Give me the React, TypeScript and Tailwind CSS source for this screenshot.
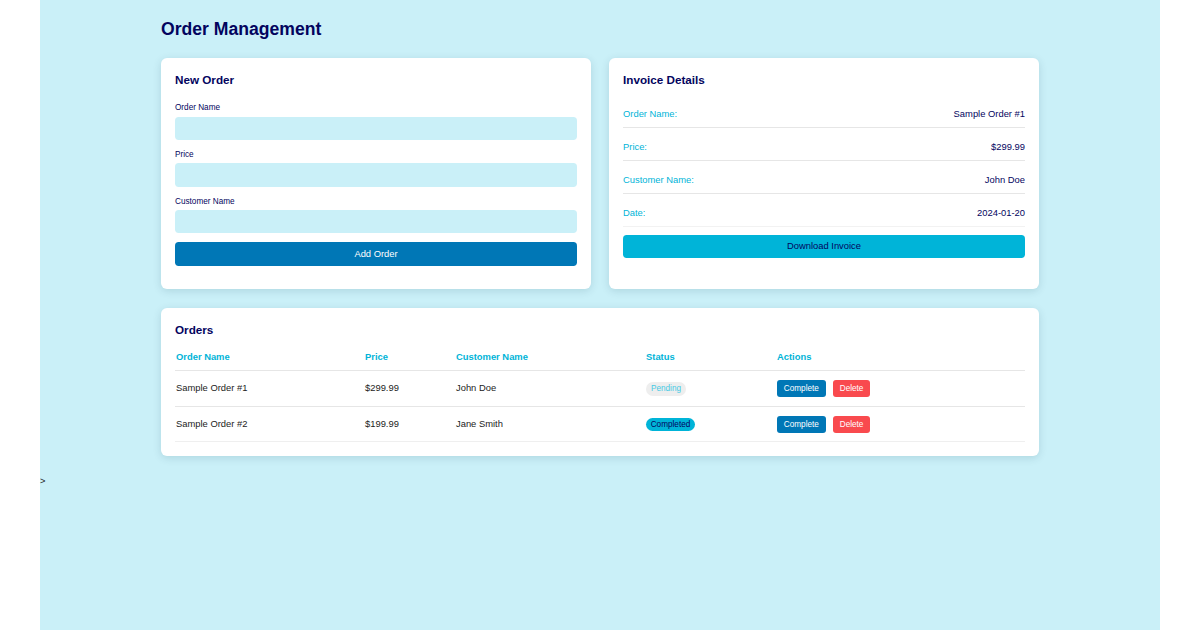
const orders = [
  { name: "Sample Order #1", price: "$299.99", customer: "John Doe", status: "Pending" },
  { name: "Sample Order #2", price: "$199.99", customer: "Jane Smith", status: "Completed" },
];

const invoice = [
  { label: "Order Name:", value: "Sample Order #1" },
  { label: "Price:", value: "$299.99" },
  { label: "Customer Name:", value: "John Doe" },
  { label: "Date:", value: "2024-01-20" },
];

function Field({ label, last }: { label: string; last?: boolean }) {
  return (
    <div className={last ? "mb-[9px]" : "mb-[10.2px]"}>
      <label className="block text-[8.2px] leading-[9.4px] mb-[3.7px] text-[#03045e]">{label}</label>
      <input type="text" className="block w-full h-[23.4px] rounded-[3.7px] bg-[#caf0f8] outline-none" />
    </div>
  );
}

export default function App() {
  return (
    <div className="bg-white min-h-screen font-['Liberation_Sans',Arial,sans-serif]">
      <div className="mx-auto w-[1120px] min-h-[630px] bg-[#caf0f8]">
        <div className="mx-auto w-[878px] pt-[19.4px] pb-[20px]">
          <h1 className="text-[17.6px] leading-[20.2px] font-bold text-[#03045e] mb-[18.4px]">Order Management</h1>

          <div className="grid grid-cols-2 gap-[18px]">
            {/* new order form */}
            <div className="bg-white rounded-[6px] shadow-[0_2px_9px_rgba(0,60,80,0.14)] pt-[15px] px-[14px] pb-[23.3px]">
              <h3 className="text-[11.7px] leading-[14px] font-bold text-[#03045e] mb-[16.5px]">New Order</h3>
              <Field label="Order Name" />
              <Field label="Price" />
              <Field label="Customer Name" last />
              <button type="button" className="block w-full h-[23.4px] rounded-[3.7px] bg-[#0077b6] text-white text-[9.4px]">
                Add Order
              </button>
            </div>

            {/* invoice */}
            <div className="bg-white rounded-[6px] shadow-[0_2px_9px_rgba(0,60,80,0.14)] pt-[15px] px-[14px] pb-[23px]">
              <h3 className="text-[11.7px] leading-[14px] font-bold text-[#03045e] mb-[14.5px]">Invoice Details</h3>
              {invoice.map((row, i) => (
                <div
                  key={row.label}
                  className={
                    "flex justify-between py-[7.2px] mb-[7.1px] border-b text-[9.4px] leading-[10.8px] " +
                    (i === invoice.length - 1 ? "border-[#f2f2f2]" : "border-[#e6e6e6]")
                  }
                >
                  <span className="text-[#00b4d8]">{row.label}</span>
                  <span className="text-[#03045e]">{row.value}</span>
                </div>
              ))}
              <button type="button" className="block w-full mt-[1.5px] h-[23.3px] rounded-[3.7px] bg-[#00b4d8] text-[#03045e] text-[9.4px]">
                Download Invoice
              </button>
            </div>
          </div>

          {/* orders list */}
          <div className="mt-[19px] bg-white rounded-[6px] shadow-[0_2px_9px_rgba(0,60,80,0.14)] pt-[15px] px-[14px] pb-[13.4px]">
            <h3 className="text-[11.7px] leading-[14px] font-bold text-[#03045e] mb-[8.1px]">Orders</h3>
            <table className="w-full table-fixed text-[9.4px]">
              <colgroup>
                <col className="w-[190px]" />
                <col className="w-[91px]" />
                <col className="w-[190px]" />
                <col className="w-[131px]" />
                <col />
              </colgroup>
              <thead>
                <tr className="text-left text-[#00b4d8] font-bold">
                  <th className="pl-[1px] py-[7.3px] leading-[10.8px] border-b border-[#e6e6e6]">Order Name</th>
                  <th className="py-[7.3px] leading-[10.8px] border-b border-[#e6e6e6]">Price</th>
                  <th className="py-[7.3px] leading-[10.8px] border-b border-[#e6e6e6]">Customer Name</th>
                  <th className="py-[7.3px] leading-[10.8px] border-b border-[#e6e6e6]">Status</th>
                  <th className="py-[7.3px] leading-[10.8px] border-b border-[#e6e6e6]">Actions</th>
                </tr>
              </thead>
              <tbody className="text-[#222]">
                {orders.map((o, i) => {
                  const line = i === orders.length - 1 ? "border-[#efefef]" : "border-[#e6e6e6]";
                  return (
                    <tr key={o.name}>
                      <td className={"pl-[1px] py-[7.3px] border-b " + line}>
                        <div className="h-[19.9px] flex items-center leading-[10.8px]">{o.name}</div>
                      </td>
                      <td className={"py-[7.3px] border-b " + line}>
                        <div className="h-[19.9px] flex items-center leading-[10.8px]">{o.price}</div>
                      </td>
                      <td className={"py-[7.3px] border-b " + line}>
                        <div className="h-[19.9px] flex items-center leading-[10.8px]">{o.customer}</div>
                      </td>
                      <td className={"py-[7.3px] border-b " + line}>
                        <div className="h-[19.9px] flex items-center">
                          {o.status === "Pending" ? (
                            <span className="inline-block h-[14px] leading-[14px] px-[5px] rounded-full bg-[#eeeeee] text-[#48cae4] text-[8.2px]">
                              Pending
                            </span>
                          ) : (
                            <span className="inline-block h-[13.4px] leading-[13.4px] px-[4.7px] rounded-full bg-[#00b4d8] text-[#03045e] text-[8.2px]">
                              Completed
                            </span>
                          )}
                        </div>
                      </td>
                      <td className={"py-[7.3px] border-b " + line}>
                        <div className="h-[19.9px] flex items-center gap-[7.3px]">
                          <button type="button" className="h-[16.7px] px-[6.8px] pt-[1px] rounded-[3px] bg-[#0077b6] text-white text-[8.2px] leading-[15.7px]">
                            Complete
                          </button>
                          <button type="button" className="h-[16.7px] px-[6.8px] pt-[1px] rounded-[3px] bg-[#f94a4e] text-white text-[8.2px] leading-[15.7px]">
                            Delete
                          </button>
                        </div>
                      </td>
                    </tr>
                  );
                })}
              </tbody>
            </table>
          </div>
        </div>
        <div className="text-[9.4px] leading-[10.8px] text-[#222]">&gt;</div>
      </div>
    </div>
  );
}
